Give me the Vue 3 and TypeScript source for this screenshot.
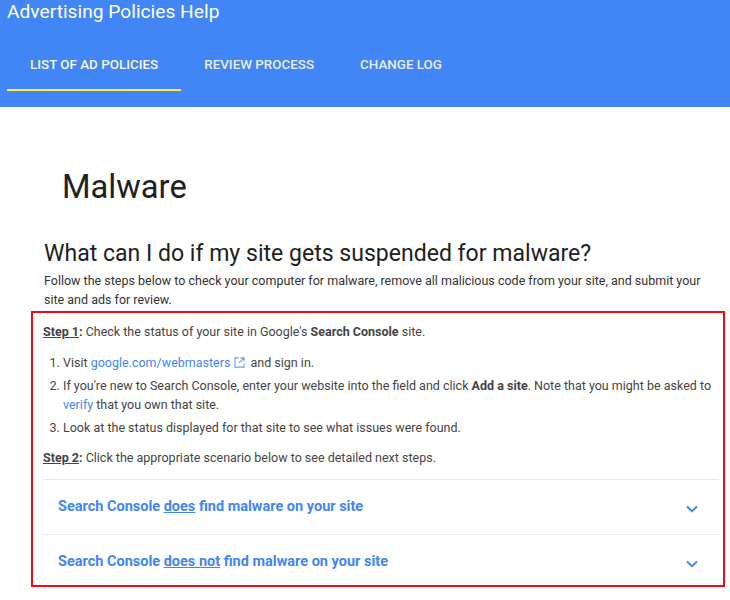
<script setup lang="ts">
const tabs: string[] = ['LIST OF AD POLICIES', 'REVIEW PROCESS', 'CHANGE LOG']
const panels = [
  { link: 'does', after: ' find malware on your site' },
  { link: 'does not', after: ' find malware on your site' },
]
</script>

<template>
  <div class="page">
    <header class="head">
      <div class="title">Advertising Policies Help</div>
      <nav class="tabs">
        <div v-for="(t, i) in tabs" :key="t" class="tab" :class="{ active: i === 0 }">{{ t }}</div>
      </nav>
    </header>
    <main class="main">
      <h1>Malware</h1>
      <h2>What can I do if my site gets suspended for malware?</h2>
      <p class="intro">Follow the steps below to check your computer for malware, remove all malicious code from your site, and submit your site and ads for review.</p>
      <section class="box">
        <p class="step"><b><u>Step 1</u>:</b> Check the status of your site in Google's <b>Search Console</b> site.</p>
        <ol>
          <li>Visit <a>google.com/webmasters</a>
            <svg class="ext" width="11" height="11" viewBox="0 0 12 12" fill="none" stroke="#6b9cf6" stroke-width="1.2"><path d="M5 1H1v10h10V7M7 1h4v4M11 1 5.5 6.5"/></svg>
            and sign in.</li>
          <li>If you're new to Search Console, enter your website into the field and click <b>Add a site</b>. Note that you might be asked to <a>verify</a> that you own that site.</li>
          <li>Look at the status displayed for that site to see what issues were found.</li>
        </ol>
        <p class="step two"><b><u>Step 2</u>:</b> Click the appropriate scenario below to see detailed next steps.</p>
        <div v-for="p in panels" :key="p.link" class="panel">
          <span class="ptext">Search Console <u>{{ p.link }}</u>{{ p.after }}</span>
          <svg class="chev" width="12" height="8" viewBox="0 0 12 8" fill="none" stroke="#4285f4" stroke-width="2"><path d="M1 1.5 6 6.2l5-4.7"/></svg>
        </div>
      </section>
    </main>
  </div>
</template>

<style>
html, body { margin: 0; background: #fff; }
</style>

<style scoped>
.page { width: 730px; height: 600px; overflow: hidden; font-family: Roboto, "Liberation Sans", sans-serif; color: #444; }
.head { height: 107px; background: #4285f4; color: #fff; box-sizing: border-box; padding-left: 7px; }
.title { font-size: 19.2px; line-height: 24px; }
.tabs { display: flex; margin-top: 17px; }
.tab { padding: 0 23px; height: 50px; line-height: 48px; font-size: 13.4px; font-weight: 500; color: #e6eefc; box-sizing: border-box; }
.tab.active { border-bottom: 2px solid #fdf04e; color: #f4f7fe; }
.main { padding: 0 5px 0 31px; }
h1 { margin: 59px 0 0 31px; font-size: 32.7px; line-height: 42px; font-weight: 400; color: #212121; }
h2 { margin: 31px 0 0 13px; font-size: 23.05px; line-height: 30px; font-weight: 400; color: #212121; }
.intro { margin: 2px 0 0 13px; width: 670px; font-size: 12.5px; line-height: 19px; color: #333; }
.box { margin-top: 2px; height: 276px; box-sizing: border-box; border: 2px solid #f8070f; padding: 9px 4px 0 10px; font-size: 12.5px; }
.step { margin: 0; line-height: 19px; }
b { font-weight: 700; }
ol { margin: 12px 0 0; padding: 0 0 0 20px; }
li { line-height: 19px; margin-bottom: 4px; }
a { color: #4285f4; }
.ext { vertical-align: -1px; margin: 0 2px 0 4px; }
.step.two { margin-top: 11px; }
.panel { height: 55px; border-top: 1px solid #e8e8e8; display: flex; align-items: center; justify-content: space-between; padding: 0 21px 2px 15px; font-size: 14.5px; font-weight: 700; color: #4285f4; box-sizing: border-box; }
.chev { margin-top: 5px; }
.step.two + .panel { margin-top: 12px; }
</style>
